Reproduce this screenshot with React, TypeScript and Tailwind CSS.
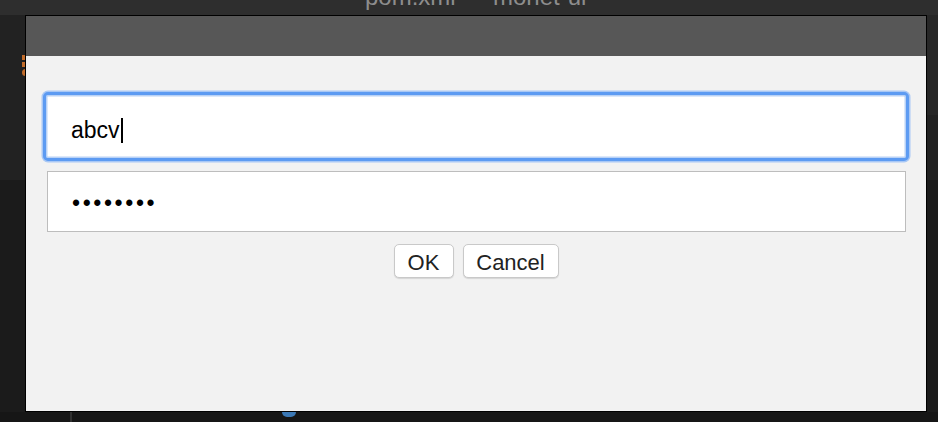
import React from 'react'

const sans = "font-['Liberation_Sans',Arial,sans-serif]"

function EditorBackdrop() {
  return (
    <div className="flex h-full w-full flex-col">
      {/* window title, mostly hidden behind the sheet */}
      <div className="h-[15px] overflow-hidden bg-[#2e2e2e]">
        <div className={`${sans} -mt-[15px] pl-[365px] text-[24px] leading-[24px] whitespace-nowrap text-[#8d8d8d]`}>
          pom.xml — monet-ui
        </div>
      </div>

      {/* toolbar strip */}
      <div className="flex h-[165px] justify-between bg-[#222222]">
        <div className="flex flex-col gap-[2px] pt-[40px] pl-[22px]">
          <div className="h-[5px] w-[4px] bg-[#c26c2b]" />
          <div className="h-[5px] w-[4px] bg-[#c26c2b]" />
          <div className="h-[7px] w-[4px] rounded-l-full bg-[#c26c2b]" />
        </div>
        <div className="h-[100px] w-[12px] bg-[#272727]" />
      </div>

      {/* editor area */}
      <div className="flex flex-1 flex-col justify-end bg-[#1b1b1b]">
        <div className="flex h-[10px] items-start bg-[#161616]">
          <div className="ml-[70px] h-full w-[2px] bg-[#303030]" />
          <div className="ml-[210px] h-[5px] w-[14px] rounded-b-full bg-[#3b78b5]" />
        </div>
      </div>
    </div>
  )
}

function LoginSheet() {
  return (
    <div className="absolute left-[25px] top-[15px] flex h-[397px] w-[902px] flex-col border border-black">
      <div className="h-[40px] bg-[#575757]" />

      <div className={`${sans} flex flex-1 flex-col bg-[#f2f2f2] pt-[36px]`}>
        {/* focused user field */}
        <div className="ml-[17px] h-[69px] w-[866px] rounded-[5px] border-[3px] border-[#5d9bf2] bg-white shadow-[0_0_0_1.5px_#a9c8f5,inset_0_0_0_1.5px_#b9d2f6]">
          <div className="flex h-full items-center pt-[7px] pl-[25px] text-[23px] leading-[23px] text-black">
            <span>abcv</span>
            <span className="ml-[1px] h-[25px] w-[2px] bg-black" />
          </div>
        </div>

        {/* password field */}
        <div className="mt-[10px] ml-[21px] h-[61px] w-[859px] border border-[#bdbdbd] bg-white">
          <div className="flex h-full items-center pt-[4px] pl-[24px] text-[23px] leading-[23px] tracking-[2.6px] text-black">
            ••••••••
          </div>
        </div>

        <div className="mt-[12px] flex justify-center gap-[9px]">
          <button className="flex h-[34px] w-[60px] items-center justify-center rounded-[5px] border border-[#c9c9c9] bg-white pt-[3px] text-[22px] leading-[22px] text-[#222222] shadow-[0_1px_1px_rgba(0,0,0,0.12)]">
            OK
          </button>
          <button className="flex h-[34px] w-[96px] items-center justify-center rounded-[5px] border border-[#c9c9c9] bg-white pt-[3px] text-[22px] leading-[22px] text-[#222222] shadow-[0_1px_1px_rgba(0,0,0,0.12)]">
            Cancel
          </button>
        </div>
      </div>
    </div>
  )
}

export default function App() {
  return (
    <div className="relative h-[422px] w-[938px] overflow-hidden bg-[#1b1b1b]">
      <EditorBackdrop />
      <LoginSheet />
    </div>
  )
}
